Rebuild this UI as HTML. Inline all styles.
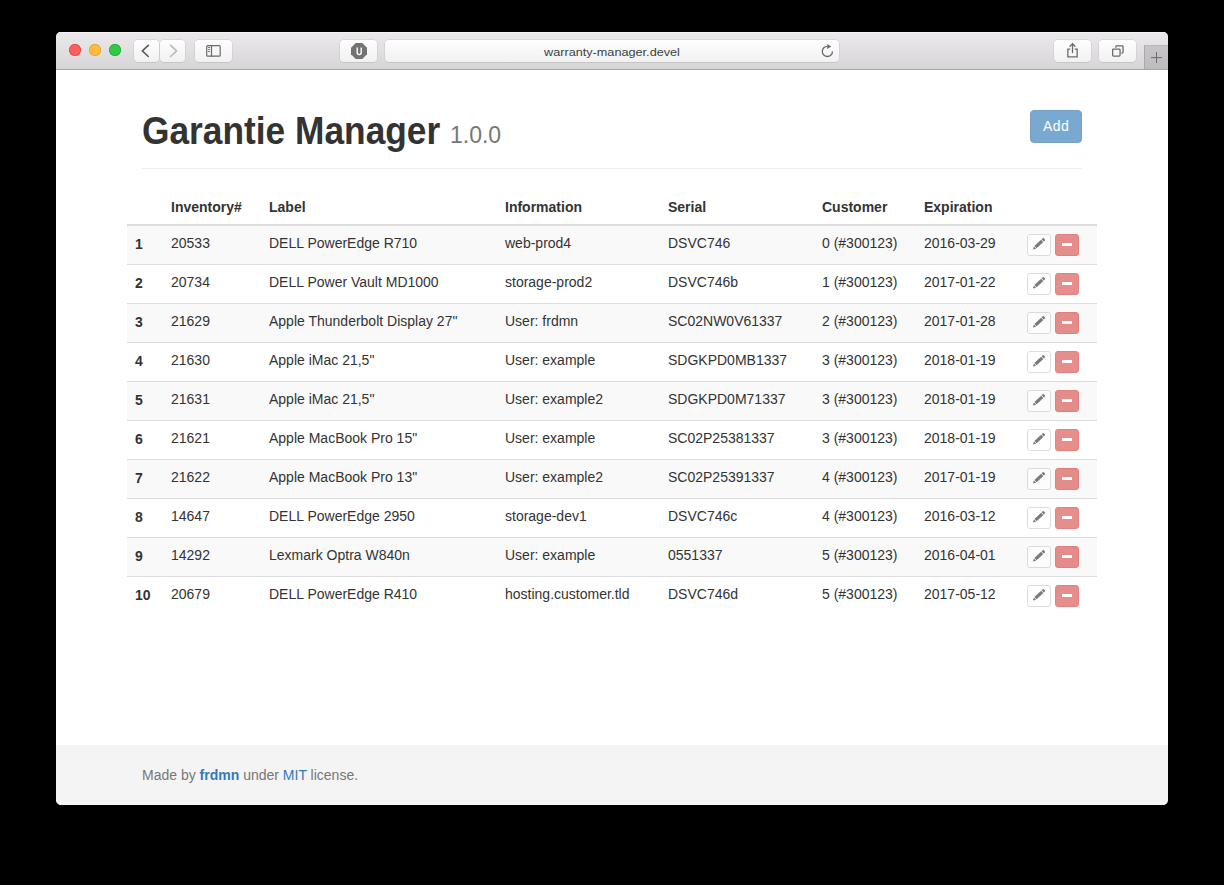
<!DOCTYPE html>
<html><head><meta charset="utf-8">
<style>
*{box-sizing:border-box;margin:0;padding:0}
html,body{width:1224px;height:885px;background:#000;overflow:hidden;font-family:"Liberation Sans",sans-serif;color:#333}
#win{position:absolute;left:56px;top:32px;width:1112px;height:773px;background:#fff;border-radius:5px 5px 5.5px 5.5px;overflow:hidden}
#tb{position:absolute;left:0;top:0;width:1112px;height:38px;background:linear-gradient(#ebe9eb,#d7d5d7);border-bottom:1px solid #a8a6a8;box-shadow:inset 0 1px 0 #f4f2f4}
.dot{position:absolute;top:12px;width:12px;height:12px;border-radius:50%}
.tbtn{position:absolute;top:8px;height:22px;border-radius:4px;background:linear-gradient(#fefefe,#f1f1f1);box-shadow:0 0 0 0.5px #c8c6c8,0 0.5px 0.5px #b0aeb0}
.t{position:absolute;white-space:nowrap;font-size:14px;line-height:20px;height:20px}
.b{font-weight:bold}
.stripe{position:absolute;left:71px;width:970px;height:38px;background:#f9f9f9}
.hl{position:absolute;left:71px;width:970px;height:1px;background:#ddd}
.bt{position:absolute;width:24px;height:22px;border-radius:3px;opacity:.65}
.be{background:#fff;border:1px solid #ccc}
.bd{background:#d9534f;border:1px solid #d43f3a}
#footer{position:absolute;left:0;top:713px;width:1112px;height:60px;background:#f4f4f4}
a{color:#337ab7;text-decoration:none}
</style></head>
<body>
<div id="win">
  <div id="tb">
    <div class="dot" style="left:13px;background:#fc605c;box-shadow:inset 0 0 0 0.7px #e0443e"></div>
    <div class="dot" style="left:33px;background:#fdbc40;box-shadow:inset 0 0 0 0.7px #dea123"></div>
    <div class="dot" style="left:53px;background:#34c84a;box-shadow:inset 0 0 0 0.7px #1aab29"></div>
    <div class="tbtn" style="left:78px;width:25px"></div>
    <div class="tbtn" style="left:104px;width:25px"></div>
    <div class="tbtn" style="left:139px;width:37px"></div>
    <div class="tbtn" style="left:284px;width:37px"></div>
    <div class="tbtn" style="left:329px;width:454px"></div>
    <div class="tbtn" style="left:998px;width:37px"></div>
    <div class="tbtn" style="left:1043px;width:37px"></div>
    <div style="position:absolute;left:1088px;top:13px;width:24px;height:24px;background:linear-gradient(#c7c5c7,#bdbbbd);border-left:1px solid #aaa8aa;border-top:1px solid #b9b7b9"></div>
    <svg style="position:absolute;left:0;top:0" width="1112" height="38" viewBox="0 0 1112 38" fill="none" stroke-linecap="round" stroke-linejoin="round">
      <path d="M92.3,13.3 L86.3,18.9 L92.3,24.5" stroke="#5c5c5c" stroke-width="1.6"/>
      <path d="M114.6,13.3 L120.6,18.9 L114.6,24.5" stroke="#b9b9b9" stroke-width="1.6"/>
      <rect x="150.7" y="13.7" width="13.5" height="10.5" rx="1" stroke="#6b6b6b" stroke-width="1.2"/>
      <path d="M155.5,13.7 V24.2" stroke="#6b6b6b" stroke-width="1.2"/>
      <path d="M152.3,15.5 H153.7 M152.3,17.5 H153.7 M152.3,19.5 H153.7" stroke="#6b6b6b" stroke-width="0.9"/>
      <polygon points="299.7,11 306.3,11 311,15.7 311,22.3 306.3,27 299.7,27 295,22.3 295,15.7" fill="#737373" stroke="none"/>
      <path d="M301.2,15.4 V20.6 A2,2 0 0 0 305.2,20.6 V15.4" stroke="#fff" stroke-width="1.4" stroke-linecap="butt"/>
      <path d="M771.4,14.3 A5.1,5.1 0 1 0 776.5,19.4" stroke="#6b6b6b" stroke-width="1.3" stroke-linecap="butt"/>
      <polygon points="771.2,12.1 775.3,14.5 771.2,17" fill="#6b6b6b" stroke="none"/>
      <path d="M1014.2,17.05 H1011.85 V24.95 H1021.15 V17.05 H1018.8" stroke="#6b6b6b" stroke-width="1.3" stroke-linejoin="miter" stroke-linecap="butt"/>
      <path d="M1016.5,11.6 V20.6 M1014,14.2 L1016.5,11.6 L1019,14.2" stroke="#6b6b6b" stroke-width="1.3"/>
      <rect x="1056.65" y="17.05" width="7.4" height="7.1" rx="0.8" stroke="#6b6b6b" stroke-width="1.3"/>
      <path d="M1059.85,15.7 V14.6 Q1059.85,13.85 1060.6,13.85 H1066.3 Q1067.05,13.85 1067.05,14.6 V20.3 Q1067.05,21.05 1066.3,21.05 H1065.4" stroke="#6b6b6b" stroke-width="1.3" stroke-linecap="butt"/>
      <path d="M1095,25.6 H1106 M1100.5,20.1 V30.9" stroke="#6a6a6a" stroke-width="1" stroke-linecap="butt"/>
    </svg>
  </div>
<div class="t" style="left:488px;top:10px;font-size:11.8px;letter-spacing:0px;transform:scaleX(1.074);transform-origin:0 0;color:#3d3d3d">warranty-manager.devel</div>
<div class="t b" style="left:86px;top:79px;font-size:38px;line-height:40px;height:40px;color:#333;transform:scaleX(0.929);transform-origin:0 0">Garantie Manager</div>
<div class="t" style="left:394px;top:88px;font-size:23px;line-height:30px;height:30px;color:#777">1.0.0</div>
<div style="position:absolute;left:974px;top:78px;width:52px;height:33px;border-radius:4px;background:#337ab7;border:1px solid #2e6da4;opacity:.65"></div>
<div class="t" style="left:987px;top:84px;color:#fff;letter-spacing:0.5px">Add</div>
<div style="position:absolute;left:86px;top:136px;width:940px;height:1px;background:#eee"></div>
<div class="t b" style="left:115px;top:165px">Inventory#</div>
<div class="t b" style="left:213px;top:165px">Label</div>
<div class="t b" style="left:449px;top:165px">Information</div>
<div class="t b" style="left:612px;top:165px">Serial</div>
<div class="t b" style="left:766px;top:165px">Customer</div>
<div class="t b" style="left:868px;top:165px">Expiration</div>
<div class="hl" style="top:192px;height:2px"></div>
<div class="stripe" style="top:194px"></div>
<div class="t b" style="left:79px;top:202px">1</div>
<div class="t" style="left:115px;top:201px">20533</div>
<div class="t" style="left:213px;top:201px">DELL PowerEdge R710</div>
<div class="t" style="left:449px;top:201px">web-prod4</div>
<div class="t" style="left:612px;top:201px">DSVC746</div>
<div class="t" style="left:766px;top:201px">0 (#300123)</div>
<div class="t" style="left:868px;top:201px">2016-03-29</div>
<div class="bt be" style="left:971px;top:202px"></div>
<div class="bt bd" style="left:999px;top:202px"></div>
<svg style="position:absolute;left:975px;top:204px;opacity:.65" width="16" height="16" viewBox="0 0 16 16"><path d="M1.90,13.60 L5.11,12.78 L2.92,10.45 Z M5.62,12.30 L12.31,6.02 L10.12,3.69 L3.43,9.97 Z M12.82,5.54 L14.13,4.31 L13.95,3.38 L12.85,2.22 L11.94,1.98 L10.63,3.21 Z" fill="#333"/></svg>
<div style="position:absolute;left:1006px;top:211px;width:10px;height:3px;background:#fff"></div>
<div class="hl" style="top:232px"></div>
<div class="t b" style="left:79px;top:241px">2</div>
<div class="t" style="left:115px;top:240px">20734</div>
<div class="t" style="left:213px;top:240px">DELL Power Vault MD1000</div>
<div class="t" style="left:449px;top:240px">storage-prod2</div>
<div class="t" style="left:612px;top:240px">DSVC746b</div>
<div class="t" style="left:766px;top:240px">1 (#300123)</div>
<div class="t" style="left:868px;top:240px">2017-01-22</div>
<div class="bt be" style="left:971px;top:241px"></div>
<div class="bt bd" style="left:999px;top:241px"></div>
<svg style="position:absolute;left:975px;top:243px;opacity:.65" width="16" height="16" viewBox="0 0 16 16"><path d="M1.90,13.60 L5.11,12.78 L2.92,10.45 Z M5.62,12.30 L12.31,6.02 L10.12,3.69 L3.43,9.97 Z M12.82,5.54 L14.13,4.31 L13.95,3.38 L12.85,2.22 L11.94,1.98 L10.63,3.21 Z" fill="#333"/></svg>
<div style="position:absolute;left:1006px;top:250px;width:10px;height:3px;background:#fff"></div>
<div class="stripe" style="top:272px"></div>
<div class="hl" style="top:271px"></div>
<div class="t b" style="left:79px;top:280px">3</div>
<div class="t" style="left:115px;top:279px">21629</div>
<div class="t" style="left:213px;top:279px">Apple Thunderbolt Display 27"</div>
<div class="t" style="left:449px;top:279px">User: frdmn</div>
<div class="t" style="left:612px;top:279px">SC02NW0V61337</div>
<div class="t" style="left:766px;top:279px">2 (#300123)</div>
<div class="t" style="left:868px;top:279px">2017-01-28</div>
<div class="bt be" style="left:971px;top:280px"></div>
<div class="bt bd" style="left:999px;top:280px"></div>
<svg style="position:absolute;left:975px;top:282px;opacity:.65" width="16" height="16" viewBox="0 0 16 16"><path d="M1.90,13.60 L5.11,12.78 L2.92,10.45 Z M5.62,12.30 L12.31,6.02 L10.12,3.69 L3.43,9.97 Z M12.82,5.54 L14.13,4.31 L13.95,3.38 L12.85,2.22 L11.94,1.98 L10.63,3.21 Z" fill="#333"/></svg>
<div style="position:absolute;left:1006px;top:289px;width:10px;height:3px;background:#fff"></div>
<div class="hl" style="top:310px"></div>
<div class="t b" style="left:79px;top:319px">4</div>
<div class="t" style="left:115px;top:318px">21630</div>
<div class="t" style="left:213px;top:318px">Apple iMac 21,5"</div>
<div class="t" style="left:449px;top:318px">User: example</div>
<div class="t" style="left:612px;top:318px">SDGKPD0MB1337</div>
<div class="t" style="left:766px;top:318px">3 (#300123)</div>
<div class="t" style="left:868px;top:318px">2018-01-19</div>
<div class="bt be" style="left:971px;top:319px"></div>
<div class="bt bd" style="left:999px;top:319px"></div>
<svg style="position:absolute;left:975px;top:321px;opacity:.65" width="16" height="16" viewBox="0 0 16 16"><path d="M1.90,13.60 L5.11,12.78 L2.92,10.45 Z M5.62,12.30 L12.31,6.02 L10.12,3.69 L3.43,9.97 Z M12.82,5.54 L14.13,4.31 L13.95,3.38 L12.85,2.22 L11.94,1.98 L10.63,3.21 Z" fill="#333"/></svg>
<div style="position:absolute;left:1006px;top:328px;width:10px;height:3px;background:#fff"></div>
<div class="stripe" style="top:350px"></div>
<div class="hl" style="top:349px"></div>
<div class="t b" style="left:79px;top:358px">5</div>
<div class="t" style="left:115px;top:357px">21631</div>
<div class="t" style="left:213px;top:357px">Apple iMac 21,5"</div>
<div class="t" style="left:449px;top:357px">User: example2</div>
<div class="t" style="left:612px;top:357px">SDGKPD0M71337</div>
<div class="t" style="left:766px;top:357px">3 (#300123)</div>
<div class="t" style="left:868px;top:357px">2018-01-19</div>
<div class="bt be" style="left:971px;top:358px"></div>
<div class="bt bd" style="left:999px;top:358px"></div>
<svg style="position:absolute;left:975px;top:360px;opacity:.65" width="16" height="16" viewBox="0 0 16 16"><path d="M1.90,13.60 L5.11,12.78 L2.92,10.45 Z M5.62,12.30 L12.31,6.02 L10.12,3.69 L3.43,9.97 Z M12.82,5.54 L14.13,4.31 L13.95,3.38 L12.85,2.22 L11.94,1.98 L10.63,3.21 Z" fill="#333"/></svg>
<div style="position:absolute;left:1006px;top:367px;width:10px;height:3px;background:#fff"></div>
<div class="hl" style="top:388px"></div>
<div class="t b" style="left:79px;top:397px">6</div>
<div class="t" style="left:115px;top:396px">21621</div>
<div class="t" style="left:213px;top:396px">Apple MacBook Pro 15"</div>
<div class="t" style="left:449px;top:396px">User: example</div>
<div class="t" style="left:612px;top:396px">SC02P25381337</div>
<div class="t" style="left:766px;top:396px">3 (#300123)</div>
<div class="t" style="left:868px;top:396px">2018-01-19</div>
<div class="bt be" style="left:971px;top:397px"></div>
<div class="bt bd" style="left:999px;top:397px"></div>
<svg style="position:absolute;left:975px;top:399px;opacity:.65" width="16" height="16" viewBox="0 0 16 16"><path d="M1.90,13.60 L5.11,12.78 L2.92,10.45 Z M5.62,12.30 L12.31,6.02 L10.12,3.69 L3.43,9.97 Z M12.82,5.54 L14.13,4.31 L13.95,3.38 L12.85,2.22 L11.94,1.98 L10.63,3.21 Z" fill="#333"/></svg>
<div style="position:absolute;left:1006px;top:406px;width:10px;height:3px;background:#fff"></div>
<div class="stripe" style="top:428px"></div>
<div class="hl" style="top:427px"></div>
<div class="t b" style="left:79px;top:436px">7</div>
<div class="t" style="left:115px;top:435px">21622</div>
<div class="t" style="left:213px;top:435px">Apple MacBook Pro 13"</div>
<div class="t" style="left:449px;top:435px">User: example2</div>
<div class="t" style="left:612px;top:435px">SC02P25391337</div>
<div class="t" style="left:766px;top:435px">4 (#300123)</div>
<div class="t" style="left:868px;top:435px">2017-01-19</div>
<div class="bt be" style="left:971px;top:436px"></div>
<div class="bt bd" style="left:999px;top:436px"></div>
<svg style="position:absolute;left:975px;top:438px;opacity:.65" width="16" height="16" viewBox="0 0 16 16"><path d="M1.90,13.60 L5.11,12.78 L2.92,10.45 Z M5.62,12.30 L12.31,6.02 L10.12,3.69 L3.43,9.97 Z M12.82,5.54 L14.13,4.31 L13.95,3.38 L12.85,2.22 L11.94,1.98 L10.63,3.21 Z" fill="#333"/></svg>
<div style="position:absolute;left:1006px;top:445px;width:10px;height:3px;background:#fff"></div>
<div class="hl" style="top:466px"></div>
<div class="t b" style="left:79px;top:475px">8</div>
<div class="t" style="left:115px;top:474px">14647</div>
<div class="t" style="left:213px;top:474px">DELL PowerEdge 2950</div>
<div class="t" style="left:449px;top:474px">storage-dev1</div>
<div class="t" style="left:612px;top:474px">DSVC746c</div>
<div class="t" style="left:766px;top:474px">4 (#300123)</div>
<div class="t" style="left:868px;top:474px">2016-03-12</div>
<div class="bt be" style="left:971px;top:475px"></div>
<div class="bt bd" style="left:999px;top:475px"></div>
<svg style="position:absolute;left:975px;top:477px;opacity:.65" width="16" height="16" viewBox="0 0 16 16"><path d="M1.90,13.60 L5.11,12.78 L2.92,10.45 Z M5.62,12.30 L12.31,6.02 L10.12,3.69 L3.43,9.97 Z M12.82,5.54 L14.13,4.31 L13.95,3.38 L12.85,2.22 L11.94,1.98 L10.63,3.21 Z" fill="#333"/></svg>
<div style="position:absolute;left:1006px;top:484px;width:10px;height:3px;background:#fff"></div>
<div class="stripe" style="top:506px"></div>
<div class="hl" style="top:505px"></div>
<div class="t b" style="left:79px;top:514px">9</div>
<div class="t" style="left:115px;top:513px">14292</div>
<div class="t" style="left:213px;top:513px">Lexmark Optra W840n</div>
<div class="t" style="left:449px;top:513px">User: example</div>
<div class="t" style="left:612px;top:513px">0551337</div>
<div class="t" style="left:766px;top:513px">5 (#300123)</div>
<div class="t" style="left:868px;top:513px">2016-04-01</div>
<div class="bt be" style="left:971px;top:514px"></div>
<div class="bt bd" style="left:999px;top:514px"></div>
<svg style="position:absolute;left:975px;top:516px;opacity:.65" width="16" height="16" viewBox="0 0 16 16"><path d="M1.90,13.60 L5.11,12.78 L2.92,10.45 Z M5.62,12.30 L12.31,6.02 L10.12,3.69 L3.43,9.97 Z M12.82,5.54 L14.13,4.31 L13.95,3.38 L12.85,2.22 L11.94,1.98 L10.63,3.21 Z" fill="#333"/></svg>
<div style="position:absolute;left:1006px;top:523px;width:10px;height:3px;background:#fff"></div>
<div class="hl" style="top:544px"></div>
<div class="t b" style="left:79px;top:553px">10</div>
<div class="t" style="left:115px;top:552px">20679</div>
<div class="t" style="left:213px;top:552px">DELL PowerEdge R410</div>
<div class="t" style="left:449px;top:552px">hosting.customer.tld</div>
<div class="t" style="left:612px;top:552px">DSVC746d</div>
<div class="t" style="left:766px;top:552px">5 (#300123)</div>
<div class="t" style="left:868px;top:552px">2017-05-12</div>
<div class="bt be" style="left:971px;top:553px"></div>
<div class="bt bd" style="left:999px;top:553px"></div>
<svg style="position:absolute;left:975px;top:555px;opacity:.65" width="16" height="16" viewBox="0 0 16 16"><path d="M1.90,13.60 L5.11,12.78 L2.92,10.45 Z M5.62,12.30 L12.31,6.02 L10.12,3.69 L3.43,9.97 Z M12.82,5.54 L14.13,4.31 L13.95,3.38 L12.85,2.22 L11.94,1.98 L10.63,3.21 Z" fill="#333"/></svg>
<div style="position:absolute;left:1006px;top:562px;width:10px;height:3px;background:#fff"></div>
<div id="footer"></div>
<div class="t" style="left:86px;top:733px;color:#777">Made by <a class="b" style="font-weight:bold">frdmn</a> under <a>MIT</a> license.</div>
</div>
</body></html>
